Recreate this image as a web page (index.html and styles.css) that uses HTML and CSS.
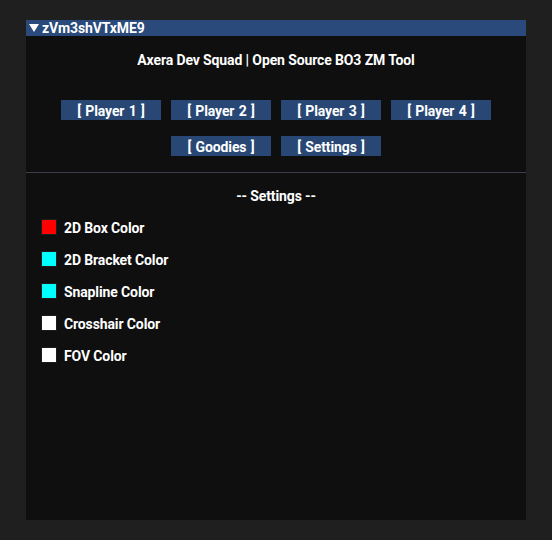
FILE: index.html
```html
<!DOCTYPE html>
<html>
<head>
<meta charset="utf-8">
<link rel="stylesheet" href="styles.css">
</head>
<body>
<div class="window">
  <div class="titlebar"><svg class="arrow" width="10" height="8" viewBox="0 0 10 8"><polygon points="0,0 10,0 5,8" fill="#ffffff"/></svg><span class="title">zVm3shVTxME9</span></div>
  <div class="content">
    <div class="header">Axera Dev Squad | Open Source BO3 ZM Tool</div>
    <div class="btnrow first">
      <div class="btn">[ Player 1 ]</div>
      <div class="btn">[ Player 2 ]</div>
      <div class="btn">[ Player 3 ]</div>
      <div class="btn">[ Player 4 ]</div>
    </div>
    <div class="btnrow second">
      <div class="btn">[ Goodies ]</div>
      <div class="btn">[ Settings ]</div>
    </div>
    <div class="separator"></div>
    <div class="section">-- Settings --</div>
    <div class="list">
      <div class="item"><span class="swatch red"></span><span class="label">2D Box Color</span></div>
      <div class="item"><span class="swatch cyan"></span><span class="label">2D Bracket Color</span></div>
      <div class="item"><span class="swatch cyan"></span><span class="label">Snapline Color</span></div>
      <div class="item"><span class="swatch white"></span><span class="label">Crosshair Color</span></div>
      <div class="item"><span class="swatch white"></span><span class="label">FOV Color</span></div>
    </div>
  </div>
</div>
</body>
</html>
```
FILE: styles.css
```css
html, body {
  margin: 0;
  padding: 0;
  background: #1f1f1f;
}
body {
  width: 552px;
  height: 540px;
  overflow: hidden;
  font-family: Roboto, "Liberation Sans", sans-serif;
  font-weight: 700;
  font-size: 14px;
  letter-spacing: -0.12px;
  color: #ffffff;
}
.window {
  margin: 20px 0 0 26px;
  width: 500px;
  height: 500px;
  background: #0f0f0f;
  display: flex;
  flex-direction: column;
}
.titlebar {
  height: 16px;
  background: #294a7a;
  display: flex;
  align-items: center;
  line-height: 16px;
}
.arrow {
  margin-left: 3px;
  margin-right: 3px;
  flex: none;
}
.content {
  display: flex;
  flex-direction: column;
}
.header {
  margin-top: 16px;
  height: 16px;
  line-height: 16px;
  text-align: center;
}
.btnrow {
  display: flex;
  justify-content: center;
  gap: 10px;
}
.btnrow.first {
  margin-top: 32px;
}
.btnrow.second {
  margin-top: 16px;
}
.btn {
  width: 100px;
  height: 20px;
  line-height: 22px;
  text-align: center;
  background: #284774;
  word-spacing: 1px;
}
.separator {
  margin-top: 16px;
  height: 1px;
  background: #3d3d47;
}
.section {
  margin-top: 15px;
  height: 16px;
  line-height: 16px;
  text-align: center;
}
.list {
  margin-top: 16px;
  display: flex;
  flex-direction: column;
  gap: 16px;
  padding-left: 15px;
}
.item {
  display: flex;
  align-items: flex-start;
  height: 16px;
  line-height: 16px;
}
.swatch {
  flex: none;
  width: 14px;
  height: 14px;
  border: 1px solid #1c1c1c;
  margin-right: 7px;
  margin-top: -1px;
}
.swatch.red { background: #ff0000; }
.swatch.cyan { background: #00ffff; }
.swatch.white { background: #ffffff; }
```
